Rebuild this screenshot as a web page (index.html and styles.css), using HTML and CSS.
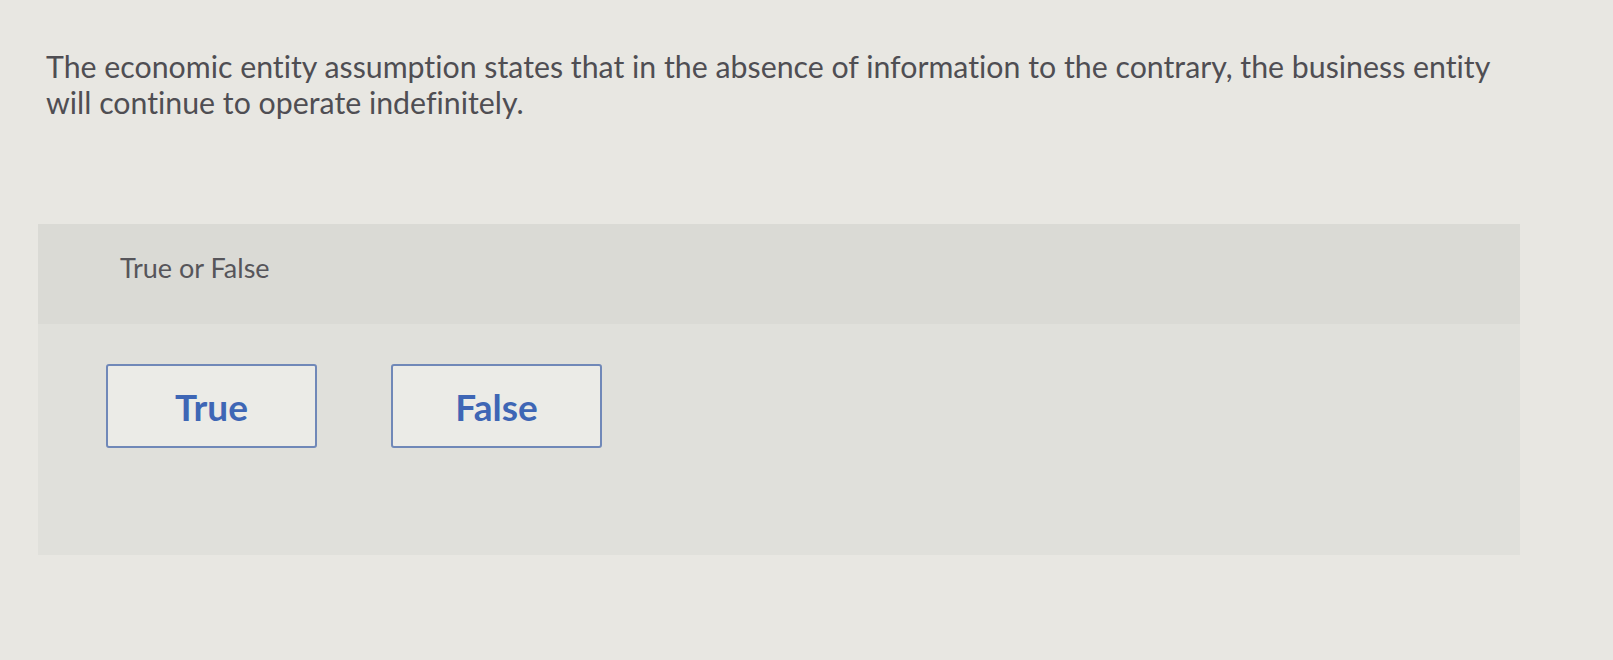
FILE: index.html
```html
<!DOCTYPE html>
<html>
<head>
<title>True or False</title>
<link rel="stylesheet" href="styles.css">
</head>
<body>
<div class="question">
  <p class="prompt">The economic entity assumption states that in the absence of information to the contrary, the business entity will continue to operate indefinitely.</p>
  <div class="answer-panel">
    <div class="panel-header">True or False</div>
    <div class="panel-body">
      <button class="choice">True</button>
      <button class="choice">False</button>
    </div>
  </div>
</div>
</body>
</html>
```

FILE: styles.css
```css
body {
  margin: 0;
  font-family: Lato, "Liberation Sans", sans-serif;
  font-variant-ligatures: none;
  background-color: #e8e7e2;
  color: #4f4e53;
}
.question {
  padding: 48px 93px 0 38px;
}
.prompt {
  margin: 0 0 0 8px;
  font-size: 30.3px;
  line-height: 36px;
}
.answer-panel {
  margin-top: 104px;
  background-color: #e0e0db;
}
.panel-header {
  height: 100px;
  padding: 27px 0 0 82px;
  box-sizing: border-box;
  background-color: #dadad5;
  font-size: 27px;
  color: #56555a;
}
.panel-body {
  display: flex;
  gap: 74px;
  padding: 40px 0 0 68px;
  height: 231px;
  box-sizing: border-box;
}
.choice {
  width: 211px;
  height: 84px;
  border: 2px solid #7088b8;
  border-radius: 3px;
  background-color: #ebebe7;
  color: #3e66b5;
  font-family: inherit;
  font-variant-ligatures: none;
  font-size: 37px;
  font-weight: bold;
  cursor: pointer;
}
```
